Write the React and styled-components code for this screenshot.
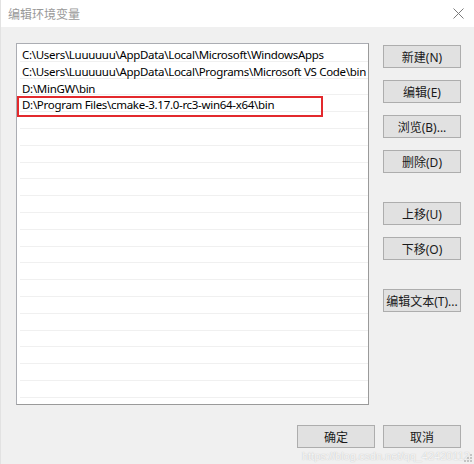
import styled, { createGlobalStyle } from 'styled-components';

const GlobalStyle = createGlobalStyle`
  html, body {
    margin: 0;
    padding: 0;
    background: #f0f0f0;
  }
  body {
    font-family: "Noto Sans", "Noto Sans CJK SC", sans-serif;
  }
`;

const paths = [
  'C:\\Users\\Luuuuuu\\AppData\\Local\\Microsoft\\WindowsApps',
  'C:\\Users\\Luuuuuu\\AppData\\Local\\Programs\\Microsoft VS Code\\bin',
  'D:\\MinGW\\bin',
  'D:\\Program Files\\cmake-3.17.0-rc3-win64-x64\\bin',
];

const sideButtons = [
  { label: '新建(N)' },
  { label: '编辑(E)' },
  { label: '浏览(B)...' },
  { label: '删除(D)' },
  { label: '上移(U)', spaced: true },
  { label: '下移(O)' },
  { label: '编辑文本(T)...', spaced: true },
];

function App() {
  const rows = [...paths, ...Array(20).fill('')];
  return (
    <>
      <GlobalStyle />
      <Window>
        <TitleBar>
          <span>编辑环境变量</span>
          <svg width="11" height="11" viewBox="0 0 11 11">
            <path d="M0.5 0.5 L10.5 10.5 M10.5 0.5 L0.5 10.5" stroke="#7a7a7a" strokeWidth="1" fill="none" />
          </svg>
        </TitleBar>

        <Body>
          <PathList>
            {rows.map((p, i) => (
              <Row key={i}>
                {p}
                {i === 3 && <Highlight />}
              </Row>
            ))}
          </PathList>

          <SideColumn>
            {sideButtons.map((b) => (
              <Button key={b.label} $spaced={b.spaced}>{b.label}</Button>
            ))}
          </SideColumn>

          <Footer>
            <Button>确定</Button>
            <Button>取消</Button>
          </Footer>
        </Body>

        <Watermark>https://blog.csdn.net/qq_42420112</Watermark>
        <Grip>
          <svg width="10" height="10" viewBox="0 0 10 10">
            <rect x="7" y="1" width="2" height="2" fill="#c4c4c4" />
            <rect x="4" y="4" width="2" height="2" fill="#c4c4c4" />
            <rect x="7" y="4" width="2" height="2" fill="#c4c4c4" />
            <rect x="1" y="7" width="2" height="2" fill="#c4c4c4" />
            <rect x="4" y="7" width="2" height="2" fill="#c4c4c4" />
            <rect x="7" y="7" width="2" height="2" fill="#c4c4c4" />
          </svg>
        </Grip>
      </Window>
    </>
  );
}

const Window = styled.div`
  position: relative;
  width: 474px;
  height: 464px;
  box-sizing: border-box;
  display: flex;
  flex-direction: column;
  background: #f0f0f0;
  border-left: 1px solid #e2e2e2;
  overflow: hidden;
`;

const TitleBar = styled.div`
  height: 27px;
  flex-shrink: 0;
  background: #fff;
  display: flex;
  align-items: center;
  justify-content: space-between;
  padding: 0 10px 0 7px;
  font-size: 12px;
  color: #999;
`;

const Body = styled.div`
  display: grid;
  grid-template-columns: 353px 78px;
  grid-template-rows: 362px auto;
  column-gap: 14px;
  padding: 16px 0 0 15px;
`;

const PathList = styled.div`
  background: #fff;
  border: 1px solid #abadb3;
  border-right-color: #9a9a9a;
  border-bottom-color: #9a9a9a;
  overflow: hidden;
  padding-top: 1px;
`;

const Row = styled.div`
  position: relative;
  height: 15.8px;
  line-height: 19.5px;
  margin-left: 3px;
  padding-left: 2px;
  border-bottom: 1px solid #f0f0f0;
  font-size: 11.5px;
  letter-spacing: -0.3px;
  color: #000;
  white-space: nowrap;
`;

const Highlight = styled.div`
  position: absolute;
  top: 1px;
  left: -3px;
  width: 306px;
  height: 21px;
  box-sizing: border-box;
  border: 2px solid #e3292d;
`;

const SideColumn = styled.div`
  display: flex;
  flex-direction: column;
  gap: 12px;
  padding-top: 2px;
`;

const Button = styled.div`
  width: 78px;
  height: 23px;
  box-sizing: border-box;
  display: flex;
  align-items: center;
  justify-content: center;
  background: #e1e1e1;
  border: 1px solid #adadad;
  font-size: 12px;
  color: #1a1a1a;
  margin-top: ${(p) => (p.$spaced ? '17px' : '0')};
`;

const Footer = styled.div`
  grid-column: 1 / -1;
  display: flex;
  justify-content: flex-end;
  gap: 8px;
  margin-top: 20px;
`;

const Watermark = styled.div`
  position: absolute;
  right: 4px;
  bottom: 2px;
  font-size: 11px;
  color: rgba(255, 255, 255, 0.85);
  text-shadow: 0 0 1px rgba(120, 120, 120, 0.5);
  font-family: "Liberation Sans", sans-serif;
`;

const Grip = styled.div`
  position: absolute;
  right: 1px;
  bottom: 1px;
  line-height: 0;
`;

export default App;
